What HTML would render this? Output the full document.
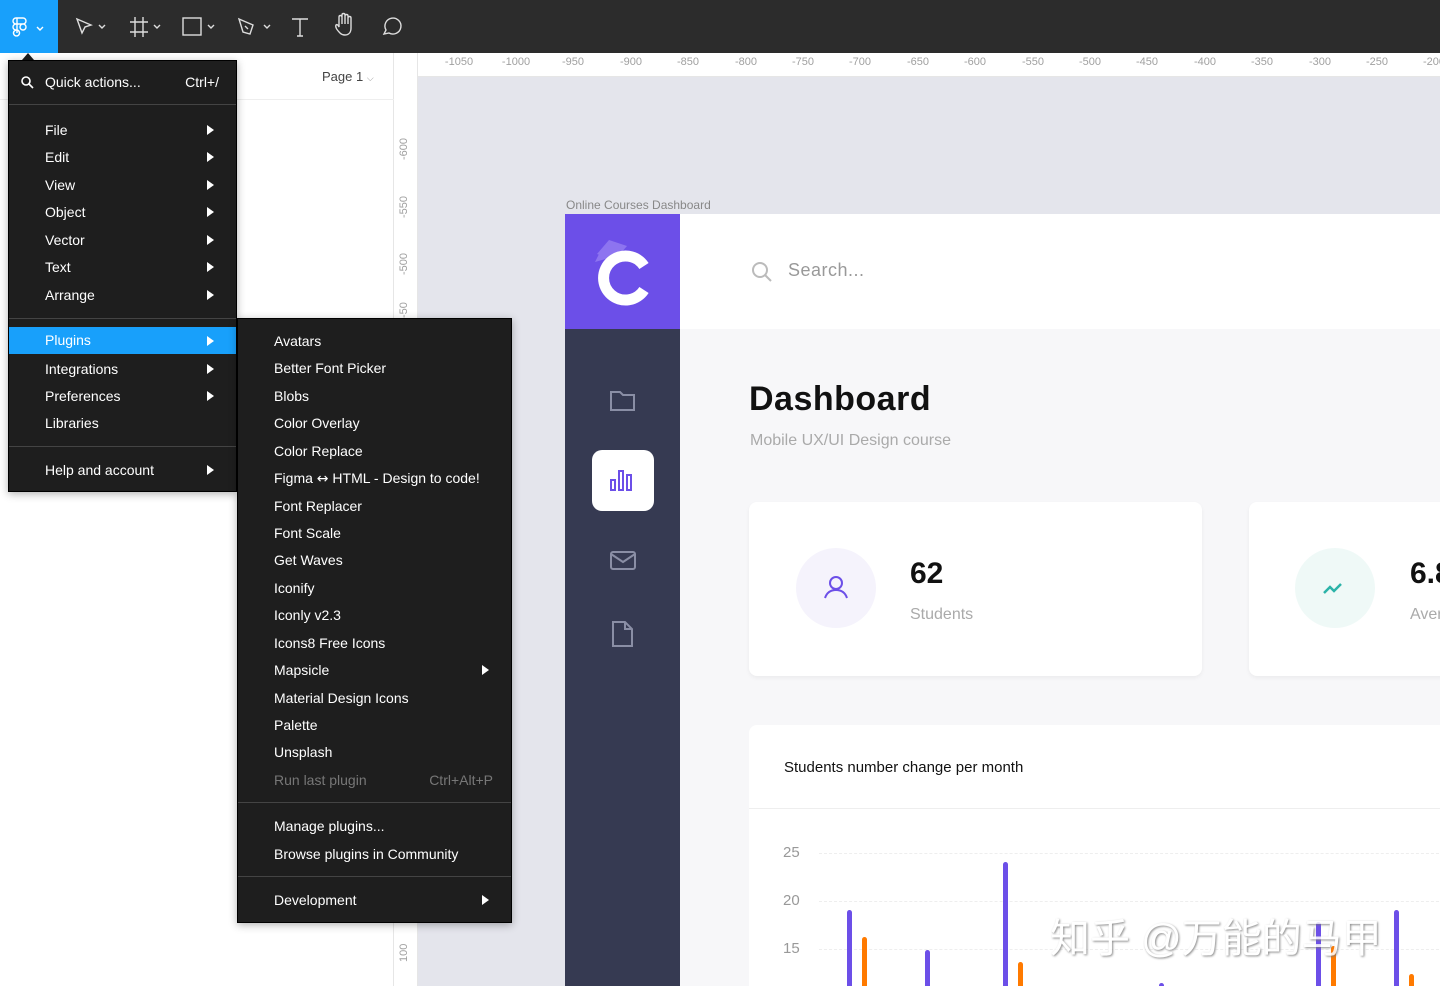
<!DOCTYPE html>
<html style="width:1440px;height:986px;overflow:hidden"><head><meta charset="utf-8"><style>
*{margin:0;padding:0;box-sizing:border-box}
body{width:1440px;height:986px;overflow:hidden;position:relative;background:#e4e5ec;font-family:"Liberation Sans",sans-serif}
.a{position:absolute}
.tb{left:0;top:0;width:1440px;height:53px;background:#2c2c2c}
.mi{position:absolute;left:0;width:100%;height:22px;line-height:22px;color:#fff;font-size:14px;padding-left:36px}
.mi .ar{position:absolute;right:22px;top:6px;width:0;height:0;border-left:7px solid #fff;border-top:5px solid transparent;border-bottom:5px solid transparent}
.sep{position:absolute;left:0;width:100%;height:1px;background:#444}
.rl{position:absolute;top:56px;font-size:11px;color:#a0a0a0;transform:translateX(-50%)}
.vr{position:absolute;left:398px;font-size:11px;color:#a0a0a0;transform:rotate(-90deg);transform-origin:left top}
.bar{position:absolute;width:5px;border-radius:3px 3px 0 0;bottom:0}
</style></head><body>
<div class="a tb"></div>
<div class="a" style="left:0;top:0;width:58px;height:53px;background:#18a0fb"></div>
<svg class="a" style="left:0;top:0" width="420" height="53" fill="none" stroke="#fff" stroke-width="1.4">
<path d="M17 18h6a3 3 0 0 1 0 6h-6zM17 18h-1a3 3 0 0 0 0 6h1zM16 24a3 3 0 0 0 0 6h1v-6zM23 24a3 3 0 1 1 0 6a3 3 0 0 1 0-6zM16 30a3 3 0 1 0 1 0v3"/><path d="M37 27l3 3 3-3"/>
<g stroke="#ddd"><path d="M77 19l14 6-6 2-3 6z"/><path d="M99 25l3 3 3-3"/>
<path d="M135 17v20M143 17v20M130 22h18M130 32h18"/><path d="M154 25l3 3 3-3"/>
<rect x="183" y="18" width="18" height="17"/><path d="M208 25l3 3 3-3"/>
<path d="M239 19l14 6-3 9-7-2zM245 26l3 3"/><path d="M264 25l3 3 3-3"/>
<path d="M292 19h16M300 19v17M297 36h6"/>
<path d="M340 33c-3-3-5-6-4-8 1-1 2 0 3 2v-10c0-2 3-2 3 0v7-9c0-2 3-2 3 0v9-8c0-2 3-2 3 0v8-6c0-2 3-2 3 0v10c0 4-2 7-6 7-2 0-4-1-5-2z"/>
<path d="M384 34l2-4a8 8 0 1 1 3 3z"/></g></svg>
<div class="a" style="left:0;top:53px;width:394px;height:933px;background:#fff;border-right:1px solid #e6e6e6"></div>
<div class="a" style="left:0;top:99px;width:394px;height:1px;background:#eee"></div>
<div class="a" style="left:322px;top:69px;font-size:13px;color:#444">Page 1 <span style="font-size:9px;color:#999">⌵</span></div>
<div class="a" style="left:394px;top:53px;width:1046px;height:24px;background:#fff;border-bottom:1px solid #e6e6e6"></div>
<div class="a" style="left:394px;top:53px;width:24px;height:933px;background:#fff;border-right:1px solid #e6e6e6"></div>
<div class="rl" style="left:459px">-1050</div><div class="rl" style="left:516px">-1000</div><div class="rl" style="left:573px">-950</div><div class="rl" style="left:631px">-900</div><div class="rl" style="left:688px">-850</div><div class="rl" style="left:746px">-800</div><div class="rl" style="left:803px">-750</div><div class="rl" style="left:860px">-700</div><div class="rl" style="left:918px">-650</div><div class="rl" style="left:975px">-600</div><div class="rl" style="left:1033px">-550</div><div class="rl" style="left:1090px">-500</div><div class="rl" style="left:1147px">-450</div><div class="rl" style="left:1205px">-400</div><div class="rl" style="left:1262px">-350</div><div class="rl" style="left:1320px">-300</div><div class="rl" style="left:1377px">-250</div><div class="rl" style="left:1434px">-200</div>
<div class="vr" style="top:160px">-600</div><div class="vr" style="top:218px">-550</div><div class="vr" style="top:275px">-500</div><div class="vr" style="top:318px">-50</div><div class="vr" style="top:962px">100</div>
<div class="a" style="left:566px;top:198px;font-size:12px;color:#888">Online Courses Dashboard</div>
<div class="a" style="left:565px;top:214px;width:875px;height:772px;background:#f7f7f9;overflow:hidden">
<div class="a" style="left:0;top:0;width:115px;height:115px;background:#6c4fe8"></div>
<div class="a" style="left:0;top:115px;width:115px;height:657px;background:#363a52"></div>
<div class="a" style="left:115px;top:0;width:760px;height:115px;background:#fff"></div>
<div class="a" style="left:184px;top:511px;width:700px;height:270px;background:#fff;border-radius:8px;overflow:hidden">
<div class="a" style="left:0;top:83px;width:700px;height:1px;background:#eee"></div>
<div class="a" style="left:35px;top:34px;font-size:15px;color:#111">Students number change per month</div>
<div class="a" style="left:34px;top:119px;font-size:15px;color:#999">25</div>
<div class="a" style="left:34px;top:167px;font-size:15px;color:#999">20</div>
<div class="a" style="left:34px;top:215px;font-size:15px;color:#999">15</div>
<div class="a" style="left:70px;top:128px;width:630px;border-top:1px dashed #eee"></div>
<div class="a" style="left:70px;top:176px;width:630px;border-top:1px dashed #eee"></div>
<div class="a" style="left:70px;top:224px;width:630px;border-top:1px dashed #eee"></div>
<div class="a" style="left:0;top:0;width:700px;height:261px">
<div class="bar" style="left:98px;height:76px;background:#6c4fe8"></div>
<div class="bar" style="left:113px;height:49px;background:#ff7a00"></div>
<div class="bar" style="left:176px;height:36px;background:#6c4fe8"></div>
<div class="bar" style="left:254px;height:124px;background:#6c4fe8"></div>
<div class="bar" style="left:269px;height:24px;background:#ff7a00"></div>
<div class="bar" style="left:410px;height:3px;background:#6c4fe8"></div>
<div class="bar" style="left:567px;height:64px;background:#6c4fe8"></div>
<div class="bar" style="left:582px;height:40px;background:#ff7a00"></div>
<div class="bar" style="left:645px;height:76px;background:#6c4fe8"></div>
<div class="bar" style="left:660px;height:12px;background:#ff7a00"></div>
</div></div>
</div>
<svg class="a" style="left:565px;top:214px" width="115" height="115"><path d="M32 40l12-14 18 6-12 14z" fill="#8d74f0"/><path d="M30 48l6-12 8 8z" fill="#8d74f0"/><path d="M79 52a22 22 0 1 0 0 24" fill="none" stroke="#fff" stroke-width="11"/></svg>
<div class="a" style="left:788px;top:260px;font-size:18px;color:#999;letter-spacing:.5px">Search...</div>
<svg class="a" style="left:750px;top:260px" width="26" height="26" fill="none" stroke="#bbb" stroke-width="2"><circle cx="10" cy="10" r="7"/><path d="M15 15l6 6"/></svg>
<svg class="a" style="left:565px;top:329px" width="115" height="657" fill="none" stroke="#8a8ea5" stroke-width="2">
<path d="M46 63h9l3 3h11v15H46z"/>
<rect x="46" y="223" width="24" height="17" rx="2"/><path d="M46 225l12 8 12-8"/>
<path d="M48 293h12l7 7v17H48z"/><path d="M60 293v7h7"/></svg>
<div class="a" style="left:592px;top:450px;width:62px;height:61px;background:#fff;border-radius:10px"></div>
<svg class="a" style="left:592px;top:450px" width="62" height="61" fill="none" stroke="#6c4fe8" stroke-width="2"><rect x="19" y="30" width="4" height="10"/><rect x="27" y="21" width="4" height="19"/><rect x="35" y="25" width="4" height="15"/></svg>
<div class="a" style="left:749px;top:380px;font-size:34px;font-weight:bold;color:#111;letter-spacing:.5px">Dashboard</div>
<div class="a" style="left:750px;top:432px;font-size:16px;color:#aaa">Mobile UX/UI Design course</div>
<div class="a" style="left:749px;top:502px;width:453px;height:174px;background:#fff;border-radius:8px;box-shadow:0 2px 4px rgba(0,0,0,.05)"></div>
<div class="a" style="left:796px;top:548px;width:80px;height:80px;border-radius:50%;background:#f5f3fc"></div>
<svg class="a" style="left:796px;top:548px" width="80" height="80" fill="none" stroke="#6c4fe8" stroke-width="2"><circle cx="40" cy="35" r="6"/><path d="M29 50c2-6 6-8 11-8s9 2 11 8"/></svg>
<div class="a" style="left:910px;top:557px;font-size:30px;font-weight:bold;color:#111">62</div>
<div class="a" style="left:910px;top:606px;font-size:16px;color:#aaa">Students</div>
<div class="a" style="left:1249px;top:502px;width:200px;height:174px;background:#fff;border-radius:8px;box-shadow:0 2px 4px rgba(0,0,0,.05)"></div>
<div class="a" style="left:1295px;top:548px;width:80px;height:80px;border-radius:50%;background:#eff9f7"></div>
<svg class="a" style="left:1295px;top:548px" width="80" height="80" fill="none" stroke="#2bb3a8" stroke-width="2.5"><path d="M29 45l6-6 4 4 7-7"/></svg>
<div class="a" style="left:1410px;top:557px;font-size:30px;font-weight:bold;color:#111">6.8</div>
<div class="a" style="left:1410px;top:606px;font-size:16px;color:#aaa">Average</div>
<div class="a" style="left:1050px;top:906px;font-size:40px;color:#fff;text-shadow:1px 1px 2px #777;font-family:'Liberation Sans','Noto Sans CJK SC',sans-serif;opacity:.85;white-space:nowrap">知乎 @万能的马甲</div>
<div class="a" style="left:22px;top:53px;width:0;height:0;border-left:6px solid transparent;border-right:6px solid transparent;border-bottom:7px solid #1e1e1e"></div>
<div class="a" style="left:8px;top:60px;width:229px;height:432px;background:#1e1e1e;border:1px solid #000;box-shadow:0 2px 8px rgba(0,0,0,.3)">
<svg class="a" style="left:11px;top:14px" width="14" height="14" fill="none" stroke="#fff" stroke-width="1.6"><circle cx="6" cy="6" r="4"/><path d="M9 9l4 4"/></svg>
<div class="mi" style="top:10px">Quick actions...<span style="position:absolute;right:17px">Ctrl+/</span></div>
<div class="sep" style="top:43px"></div>
<div class="mi" style="top:58px">File<i class="ar"></i></div>
<div class="mi" style="top:85px">Edit<i class="ar"></i></div>
<div class="mi" style="top:113px">View<i class="ar"></i></div>
<div class="mi" style="top:140px">Object<i class="ar"></i></div>
<div class="mi" style="top:168px">Vector<i class="ar"></i></div>
<div class="mi" style="top:195px">Text<i class="ar"></i></div>
<div class="mi" style="top:223px">Arrange<i class="ar"></i></div>
<div class="sep" style="top:257px"></div>
<div class="mi" style="top:266px;height:27px;line-height:27px;background:#18a0fb">Plugins<i class="ar" style="top:9px"></i></div>
<div class="mi" style="top:297px">Integrations<i class="ar"></i></div>
<div class="mi" style="top:324px">Preferences<i class="ar"></i></div>
<div class="mi" style="top:351px">Libraries</div>
<div class="sep" style="top:385px"></div>
<div class="mi" style="top:398px">Help and account<i class="ar"></i></div>
</div>
<div class="a" style="left:237px;top:318px;width:275px;height:605px;background:#1e1e1e;border:1px solid #000;box-shadow:0 2px 8px rgba(0,0,0,.3)">
<div class="mi" style="top:11px">Avatars</div>
<div class="mi" style="top:38px">Better Font Picker</div>
<div class="mi" style="top:66px">Blobs</div>
<div class="mi" style="top:93px">Color Overlay</div>
<div class="mi" style="top:121px">Color Replace</div>
<div class="mi" style="top:148px">Figma <span style="font-family:'DejaVu Sans',sans-serif;font-size:14px">↔</span> HTML - Design to code!</div>
<div class="mi" style="top:176px">Font Replacer</div>
<div class="mi" style="top:203px">Font Scale</div>
<div class="mi" style="top:230px">Get Waves</div>
<div class="mi" style="top:258px">Iconify</div>
<div class="mi" style="top:285px">Iconly v2.3</div>
<div class="mi" style="top:313px">Icons8 Free Icons</div>
<div class="mi" style="top:340px">Mapsicle<i class="ar"></i></div>
<div class="mi" style="top:368px">Material Design Icons</div>
<div class="mi" style="top:395px">Palette</div>
<div class="mi" style="top:422px">Unsplash</div>
<div class="mi" style="top:450px;color:#777">Run last plugin<span style="position:absolute;right:18px">Ctrl+Alt+P</span></div>
<div class="sep" style="top:483px"></div>
<div class="mi" style="top:496px">Manage plugins...</div>
<div class="mi" style="top:524px">Browse plugins in Community</div>
<div class="sep" style="top:557px"></div>
<div class="mi" style="top:570px">Development<i class="ar"></i></div>
</div>
</body></html>
